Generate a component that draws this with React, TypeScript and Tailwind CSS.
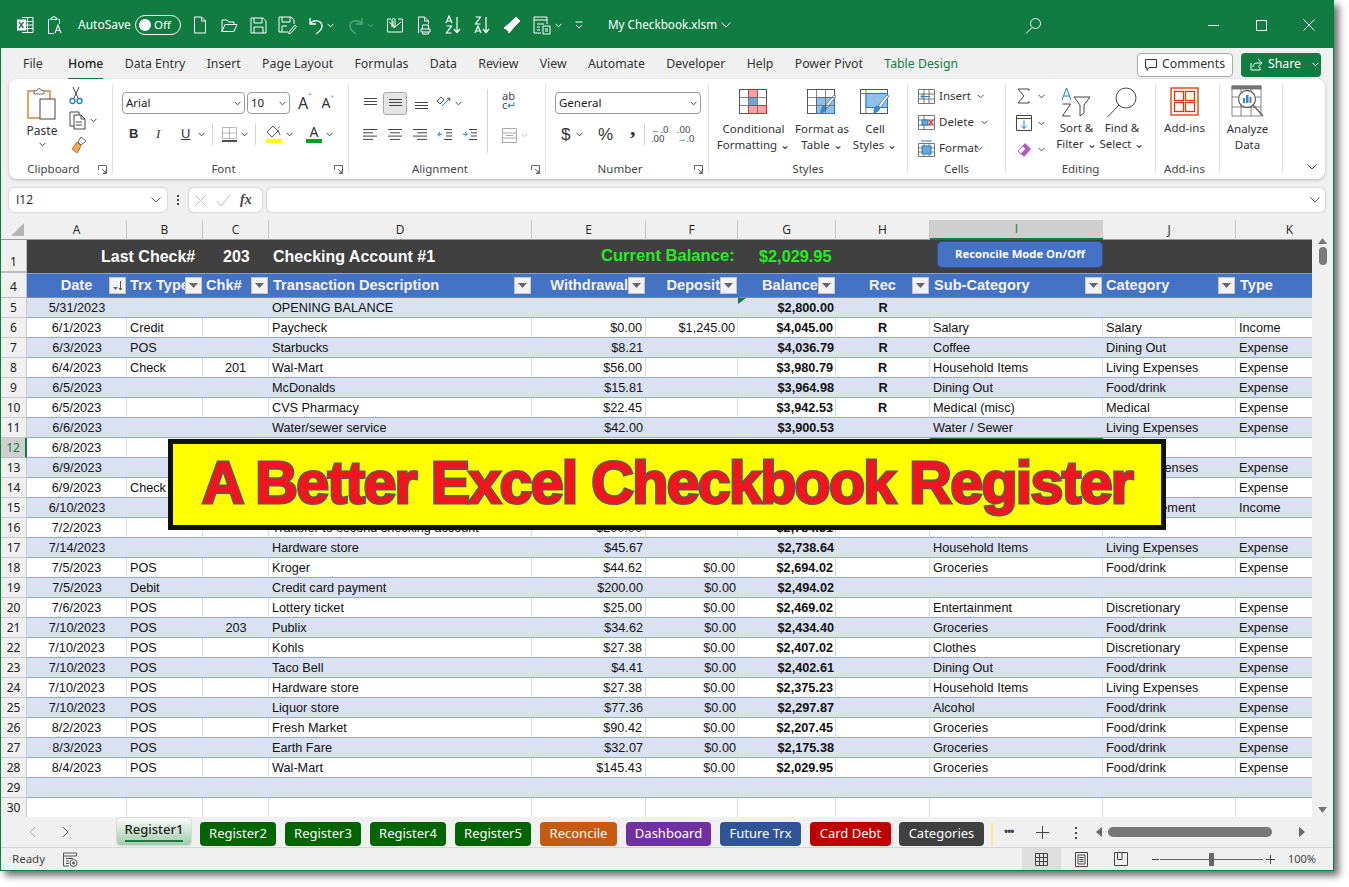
import type { ReactNode } from "react";

type Row = { n: number; c: string[] };

const rowsData: Row[] = [
  { n: 5, c: ["5/31/2023", "", "", "OPENING BALANCE", "", "", "$2,800.00", "R", "", "", ""] },
  { n: 6, c: ["6/1/2023", "Credit", "", "Paycheck", "$0.00", "$1,245.00", "$4,045.00", "R", "Salary", "Salary", "Income"] },
  { n: 7, c: ["6/3/2023", "POS", "", "Starbucks", "$8.21", "", "$4,036.79", "R", "Coffee", "Dining Out", "Expense"] },
  { n: 8, c: ["6/4/2023", "Check", "201", "Wal-Mart", "$56.00", "", "$3,980.79", "R", "Household Items", "Living Expenses", "Expense"] },
  { n: 9, c: ["6/5/2023", "", "", "McDonalds", "$15.81", "", "$3,964.98", "R", "Dining Out", "Food/drink", "Expense"] },
  { n: 10, c: ["6/5/2023", "", "", "CVS Pharmacy", "$22.45", "", "$3,942.53", "R", "Medical (misc)", "Medical", "Expense"] },
  { n: 11, c: ["6/6/2023", "", "", "Water/sewer service", "$42.00", "", "$3,900.53", "", "Water / Sewer", "Living Expenses", "Expense"] },
  { n: 12, c: ["6/8/2023", "", "", "", "", "", "", "", "", "", ""] },
  { n: 13, c: ["6/9/2023", "", "", "", "", "", "", "", "", "Living Expenses", "Expense"] },
  { n: 14, c: ["6/9/2023", "Check", "", "", "", "", "", "", "", "", "Expense"] },
  { n: 15, c: ["6/10/2023", "", "", "", "", "", "", "", "", "Reimbursement", "Income"] },
  { n: 16, c: ["7/2/2023", "", "", "Transfer to second checking account", "$200.00", "", "$2,784.31", "", "", "", ""] },
  { n: 17, c: ["7/14/2023", "", "", "Hardware store", "$45.67", "", "$2,738.64", "", "Household Items", "Living Expenses", "Expense"] },
  { n: 18, c: ["7/5/2023", "POS", "", "Kroger", "$44.62", "$0.00", "$2,694.02", "", "Groceries", "Food/drink", "Expense"] },
  { n: 19, c: ["7/5/2023", "Debit", "", "Credit card payment", "$200.00", "$0.00", "$2,494.02", "", "", "", ""] },
  { n: 20, c: ["7/6/2023", "POS", "", "Lottery ticket", "$25.00", "$0.00", "$2,469.02", "", "Entertainment", "Discretionary", "Expense"] },
  { n: 21, c: ["7/10/2023", "POS", "203", "Publix", "$34.62", "$0.00", "$2,434.40", "", "Groceries", "Food/drink", "Expense"] },
  { n: 22, c: ["7/10/2023", "POS", "", "Kohls", "$27.38", "$0.00", "$2,407.02", "", "Clothes", "Discretionary", "Expense"] },
  { n: 23, c: ["7/10/2023", "POS", "", "Taco Bell", "$4.41", "$0.00", "$2,402.61", "", "Dining Out", "Food/drink", "Expense"] },
  { n: 24, c: ["7/10/2023", "POS", "", "Hardware store", "$27.38", "$0.00", "$2,375.23", "", "Household Items", "Living Expenses", "Expense"] },
  { n: 25, c: ["7/10/2023", "POS", "", "Liquor store", "$77.36", "$0.00", "$2,297.87", "", "Alcohol", "Food/drink", "Expense"] },
  { n: 26, c: ["8/2/2023", "POS", "", "Fresh Market", "$90.42", "$0.00", "$2,207.45", "", "Groceries", "Food/drink", "Expense"] },
  { n: 27, c: ["8/3/2023", "POS", "", "Earth Fare", "$32.07", "$0.00", "$2,175.38", "", "Groceries", "Food/drink", "Expense"] },
  { n: 28, c: ["8/4/2023", "POS", "", "Wal-Mart", "$145.43", "$0.00", "$2,029.95", "", "Groceries", "Food/drink", "Expense"] },
  { n: 29, c: ["", "", "", "", "", "", "", "", "", "", ""] },
  { n: 30, c: ["", "", "", "", "", "", "", "", "", "", ""] },
];

// column K runs on past the vertical scrollbar, so the sheet clips it
const gridCols = "grid grid-cols-[26px_100px_76px_66px_263px_114px_92px_98px_94px_173px_133px_108px]";
const cellAlign = [
  "text-center",
  "text-left pl-[3px]",
  "text-center",
  "text-left pl-[3px]",
  "text-right pr-[3px]",
  "text-right pr-[2px]",
  "text-right pr-[2px] font-bold",
  "text-center font-bold",
  "text-left pl-[3px]",
  "text-left pl-[3px]",
  "text-left pl-[3px]",
];

function S({ w, h, children, className, sw = 1 }: { w: number; h: number; children: ReactNode; className?: string; sw?: number }) {
  return (
    <svg width={w} height={h} viewBox={`0 0 ${w} ${h}`} fill="none" stroke="currentColor" strokeWidth={sw} className={className}>
      {children}
    </svg>
  );
}

const Chev = ({ className = "text-[#444]" }: { className?: string }) => (
  <S w={7} h={5} className={className}><path d="M.5.8 3.5 3.8 6.5.8" /></S>
);

function Launcher() {
  return (
    <S w={9} h={9} className="text-[#666]">
      <path d="M.5 5V.5h8v8H5M4 4l4 4M8 5v3H5" />
    </S>
  );
}

function Group({ w, label, launcher, children }: { w: string; label: string; launcher?: boolean; children: ReactNode }) {
  return (
    <div className={`${w} flex flex-col shrink-0`}>
      <div className="flex-1 relative min-h-0 flex">{children}</div>
      <div className="h-[20px] flex items-center text-[11.5px] text-[#444]">
        <div className="flex-1 text-center">{label}</div>
        {launcher && <div className="w-[14px] flex justify-start"><Launcher /></div>}
      </div>
    </div>
  );
}

const Sep = () => <div className="w-px my-[5px] bg-[#e1e1e1] shrink-0" />;
const VLine = ({ className }: { className: string }) => <div className={`w-px bg-[#d5d5d5] ${className}`} />;

function TitleIcons() {
  return (
    <>
      {/* excel logo */}
      <S w={18} h={18} className="ml-[15px]">
        <path d="M6 1.5h11v15H6M6 5.5h11M6 9h11M6 12.5h11M11.5 1.5v15" />
        <rect x={1} y={3.5} width={9} height={11} fill="#fff" stroke="none" />
        <path d="M3 6l4.5 6M7.5 6 3 12" stroke="#107c41" strokeWidth={1.3} />
      </S>
      {/* clipboard with A */}
      <S w={18} h={20} className="ml-[13px]">
        <path d="M3 4.5H1.5v14H7M11 4.5h1.5V9M4 4.5V3h1.5a1.5 1.5 0 0 1 3 0H10v1.500z" />
        <path d="M8 18l3-8 3 8M9 15.500h4" strokeWidth={1.1} />
      </S>
      <span className="ml-[13px] text-[12px] text-white w-[54px]">AutoSave</span>
      <div className="w-[46px] h-[20px] rounded-full border border-white flex items-center pl-[3px] gap-[3px] ml-[3px]">
        <div className="w-[12px] h-[12px] rounded-full bg-white" />
        <span className="text-[11.5px] text-white">Off</span>
      </div>
      <S w={14} h={18} className="ml-[12px]"><path d="M1.5 1h7l4 4v12h-11zM8.500 1v4h4" /></S>
      <S w={17} h={15} className="ml-[14px]"><path d="M1 13.500V2h5l1.500 2H13v2.500M1 13.500h12l3-7H4z" /></S>
      <S w={17} h={17} className="ml-[12px]"><path d="M1 1h12l3 3v12H1zM4 1v5h8V1M4 16v-6h9v6" /></S>
      <S w={19} h={18} className="ml-[11px]"><path d="M1 1h12l3 3v4M10 16H1V1M4 1v5h8V1M4 16v-6h5" /><path d="M11 16l6-7 1.500 1.500-6 7-2 .5z" /></S>
      <S w={18} h={19} className="ml-[10px]"><path d="M3 2v6h6M3 8c3-5 12-4 12 2 0 4-3 6-6 8" strokeWidth={1.3} /></S>
      <Chev className="text-white ml-[2px]" />
      <S w={18} h={19} className="ml-[13px] text-[#5fa983]"><path d="M15 2v6H9M15 8C12 3 3 4 3 10c0 4 3 6 6 8" strokeWidth={1.3} /></S>
      <Chev className="text-[#5fa983] ml-[2px]" />
      <S w={18} h={16} className="ml-[12px]"><path d="M5 2H1.500v13h15V2H12M3 5l6 5 6-5" /><path d="M6 10V3a1.500 1.500 0 0 1 3 0v6.500a1 1 0 0 1-2 0V4" /></S>
      <S w={14} h={19} className="ml-[13px]"><path d="M1.500 12V1h6l4 4v3M7.500 1v4h4M1.500 12V17M4 13h9v3H4zM5.500 13v-4h6v4M5.500 16v2h6v-2" /></S>
      <S w={17} h={20} className="ml-[14px]" sw={1.2}><path d="M1 8l3-7 3 7M2 6h4M1.500 11h5l-5 7h5M12 2v15M9 14l3 3.500 3-3.500" /></S>
      <S w={17} h={20} className="ml-[12px]" sw={1.2}><path d="M1.500 2h5l-5 7h5M1 18l3-7 3 7M2 16h4M12 2v15M9 14l3 3.500 3-3.500" /></S>
      <S w={19} h={19} className="ml-[11px]"><path d="M14 1l4 4-6 6-4-4z" fill="#fff" /><path d="M8 7l4 4-5 6-5-5z" fill="#fff" /><path d="M3 13l3 3" stroke="#107c41" /></S>
      <S w={19} h={19} className="ml-[12px]"><path d="M1 1h13M1 4h13M14 8V1M1 1v16h7M4 8h7M4 11h3M4 14h3M10 10h7v8h-7zM12 13h3M12 15h3" /></S>
      <Chev className="text-white ml-[3px]" />
      <S w={8} h={9} className="ml-[13px]"><path d="M.5 1h7M1 4l3 3 3-3" /></S>
    </>
  );
}

function Sel({ text, w }: { text: string; w: string }) {
  return (
    <div className={`${w} h-[22px] bg-white border border-[#9a9a9a] rounded-[4px] flex items-center justify-between px-[3px] shrink-0`}>
      <span className="text-[11.5px] text-[#222]">{text}</span>
      <Chev />
    </div>
  );
}

function Clipboard() {
  return (
    <div className="flex pl-[16px] pt-[8px] gap-[10px]">
      <div className="flex flex-col items-center w-[34px]">
        <svg width={30} height={33} viewBox="0 0 30 33" fill="none">
          <rect x={1} y={4} width={22} height={27} fill="#fff" stroke="#d9862a" strokeWidth={1.500} />
          <path d="M7 7V3.500h3a2 2 0 0 1 4 0h3V7z" fill="#fff" stroke="#777" />
          <rect x={13} y={12} width={15} height={20} fill="#fff" stroke="#444" />
        </svg>
        <span className="text-[12px] text-[#333] mt-[3px] leading-[16px]">Paste</span>
        <Chev className="text-[#444] mt-[3px]" />
      </div>
      <div className="flex flex-col items-start gap-[6px] -mt-[1px]">
        <S w={14} h={19} className="text-[#444]"><path d="M4 1l5 11M10 1 5 12" /><circle cx={3.500} cy={15} r={2.500} stroke="#1b7dc4" strokeWidth={1.300} /><circle cx={10.500} cy={15} r={2.500} stroke="#1b7dc4" strokeWidth={1.300} /></S>
        <div className="flex items-center gap-[4px]">
          <S w={17} h={19} className="text-[#444]"><path d="M1 1h9v3M1 1v14h4M5 4h7l4 4v10H5zM12 4v4h4M7 11h6M7 14h6" /></S>
          <Chev />
        </div>
        <svg width={16} height={19} viewBox="0 0 16 19" fill="none" className="ml-[2px]">
          <path d="M10 1l5 4-5 4-3-3z" fill="#fff" stroke="#666" />
          <path d="M6 6l4 4-4 7-5-4z" fill="#f3a85c" stroke="#d06b12" />
        </svg>
      </div>
    </div>
  );
}

function FontGroup() {
  return (
    <div className="flex flex-col pl-[9px] pt-[13px]">
      <div className="flex items-center">
        <Sel text="Arial" w="w-[123px]" />
        <div className="w-[2px]" />
        <Sel text="10" w="w-[43px]" />
        <span className="ml-[8px] text-[16px] text-[#333] leading-none">A<sup className="text-[8px] text-[#1b7dc4] top-[-8px]">ˆ</sup></span>
        <span className="ml-[10px] text-[14px] text-[#333] leading-none">A<sup className="text-[8px] text-[#1b7dc4] top-[-5px]">ˇ</sup></span>
      </div>
      <div className="flex items-center mt-[8px] h-[24px] text-[#333]">
        <span className="ml-[7px] w-[10px] text-[13px] font-bold font-['Liberation_Sans',sans-serif]">B</span>
        <span className="ml-[17px] w-[8px] text-[13px] italic font-['Liberation_Serif',serif]">I</span>
        <span className="ml-[17px] w-[10px] text-[13px] underline font-['Liberation_Sans',sans-serif]">U</span>
        <div className="ml-[7px]"><Chev /></div>
        <VLine className="ml-[7px] h-[22px]" />
        <S w={15} h={15} className="ml-[9px] text-[#777]"><path d="M.5.5h14v11H.5zM7.500.5v11M.5 6h14" strokeDasharray="1 1" /><path d="M0 14h15" stroke="#111" strokeWidth={1.500} /></S>
        <div className="ml-[4px]"><Chev /></div>
        <VLine className="ml-[7px] h-[22px]" />
        <svg width={16} height={19} viewBox="0 0 16 19" fill="none" className="ml-[10px]">
          <path d="M7 1 1 7l5 5 6-6zM12 5l2 5" stroke="#555" />
          <path d="M12 3.500l1.500-2" stroke="#1b7dc4" />
          <rect x={0} y={14} width={16} height={4} fill="#ffff00" />
        </svg>
        <div className="ml-[4px]"><Chev /></div>
        <div className="ml-[13px] w-[16px] flex flex-col items-center">
          <span className="text-[14px] leading-[14px] text-[#333]">A</span>
          <div className="w-[16px] h-[4px] bg-[#00a020]" />
        </div>
        <div className="ml-[4px]"><Chev /></div>
      </div>
    </div>
  );
}

function Lines({ a }: { a: number[] }) {
  return (
    <S w={16} h={13} className="text-[#444]">
      {a.map((x, i) => (
        <path key={i} d={`M${x} ${1.5 + i * 3.3}h${i % 2 === 0 ? 14 : 10}`} />
      ))}
    </S>
  );
}

function Alignment() {
  return (
    <div className="flex pl-[8px] pt-[13px]">
      <div className="flex flex-col">
        <div className="flex items-center h-[22px] w-[126px]">
          <div className="w-[26px] flex justify-center -mt-[3px]"><S w={15} h={10} className="text-[#444]"><path d="M1 1.500h13M1 4.500h13M1 7.500h13" /></S></div>
          <div className="w-[24px] h-[23px] rounded-[3px] bg-[#e5e5e5] border border-[#a8a8a8] flex items-center justify-center"><S w={15} h={10} className="text-[#444]"><path d="M1 1.500h13M1 4.500h13M1 7.500h13" /></S></div>
          <div className="w-[28px] flex justify-center mt-[5px]"><S w={15} h={10} className="text-[#444]"><path d="M1 1.500h13M1 4.500h13M1 7.500h13" /></S></div>
          <S w={16} h={16} className="text-[#555] ml-[1px]"><path d="M1 6l4-4 3 3-4 4zM6 11l7-7M14 3l-3 .5M14 3l-.5 3" /><path d="M6 11l7-7" stroke="#1b7dc4" /></S>
          <div className="ml-[3px]"><Chev /></div>
        </div>
        <div className="flex items-center h-[24px] mt-[8px] w-[126px]">
          <div className="w-[26px] flex justify-center"><Lines a={[1, 1, 1, 1]} /></div>
          <div className="w-[26px] flex justify-center"><Lines a={[1, 3, 1, 3]} /></div>
          <div className="w-[26px] flex justify-center"><Lines a={[1, 5, 1, 5]} /></div>
          <div className="w-[26px] flex justify-center">
            <S w={16} h={13} className="text-[#444]"><path d="M7 1.500h8M9 4.800h6M9 8h6M7 11.500h8" /><path d="M5 6.300H1M3 4 1 6.300 3 8.500" stroke="#1b7dc4" /></S>
          </div>
          <div className="w-[26px] flex justify-center">
            <S w={16} h={13} className="text-[#444]"><path d="M7 1.500h8M9 4.800h6M9 8h6M7 11.500h8" /><path d="M1 6.300h4M3 4l2 2.300L3 8.500" stroke="#1b7dc4" /></S>
          </div>
        </div>
      </div>
      <VLine className="ml-[4px] h-[64px] -mt-[3px]" />
      <div className="flex flex-col items-start pl-[14px] -mt-[3px]">
        <div className="h-[22px] w-[18px] text-[11px] leading-[9px] text-[#444] mt-[2px] whitespace-nowrap">ab<br />c<span className="text-[#1b7dc4]">↵</span></div>
        <div className="flex items-center mt-[15px] gap-[4px] text-[#aaa]">
          <S w={15} h={15}><path d="M.5.5h14v14H.5zM.5 5h14M.5 10h14M4 7.500h7" /></S>
          <Chev className="text-[#bbb]" />
        </div>
      </div>
    </div>
  );
}

function NumberGroup() {
  return (
    <div className="flex flex-col pl-[9px] pt-[13px]">
      <Sel text="General" w="w-[146px]" />
      <div className="flex items-center mt-[8px] h-[24px] text-[#333]">
        <span className="ml-[6px] w-[10px] text-[17px] leading-none font-['Liberation_Sans',sans-serif]">$</span>
        <div className="ml-[5px]"><Chev /></div>
        <span className="ml-[15px] w-[18px] text-[17px] leading-none font-['Liberation_Sans',sans-serif]">%</span>
        <span className="ml-[14px] w-[8px] text-[22px] leading-none font-bold font-['Liberation_Serif',serif] -mt-[13px]">,</span>
        <VLine className="ml-[6px] h-[22px]" />
        <div className="ml-[6px] w-[18px] text-[9.500px] leading-[9px] text-[#444] whitespace-nowrap"><span className="text-[#1b7dc4]">←</span>.0<br />.00</div>
        <div className="ml-[8px] w-[18px] text-[9.500px] leading-[9px] text-[#444] whitespace-nowrap">.00<br /><span className="text-[#1b7dc4]">→</span>.0</div>
      </div>
    </div>
  );
}

function Grid5({ children }: { children?: ReactNode }) {
  return (
    <svg width={32} height={28} viewBox="0 0 32 28" fill="none">
      <rect x={1.500} y={1.500} width={27} height={24} fill="#fff" stroke="#555" />
      {children}
      <path d="M1.500 9.500h27M1.500 17.500h27M10.500 1.500v24M19.500 1.500v24" stroke="#666" strokeWidth={0.8} />
    </svg>
  );
}

function Brush() {
  return (
    <g>
      <path d="M30 8 21 20l-2-2 9-11z" fill="#fff" stroke="#666" strokeWidth={0.8} />
      <path d="M17 18c3-1 5 1 4 3-1 3-5 4-7 5 1-2 0-6 3-8z" fill="#3d87c6" />
    </g>
  );
}

function BigBtn({ icon, l1, l2, w }: { icon: ReactNode; l1: string; l2: string; w: string }) {
  return (
    <div className={`${w} flex flex-col items-center text-[11.5px] leading-[16px] text-[#333]`}>
      <div className="h-[30px] flex items-start justify-center">{icon}</div>
      <div className="mt-[3px] whitespace-nowrap">{l1}</div>
      <div className="whitespace-nowrap flex items-center gap-[3px]">{l2}</div>
    </div>
  );
}

function Styles() {
  return (
    <div className="flex pt-[9px] pl-[8px]">
      <BigBtn
        w="w-[73px]"
        l1="Conditional"
        l2="Formatting ⌄"
        icon={
          <Grid5>
            <rect x={10.500} y={1.500} width={9} height={8} fill="#f8a0a8" stroke="#d22" />
            <rect x={10.500} y={9.500} width={9} height={8} fill="#6aa8dc" />
            <rect x={10.500} y={17.500} width={18} height={8} fill="#f8a0a8" stroke="#d22" />
          </Grid5>
        }
      />
      <BigBtn
        w="w-[64px]"
        l1="Format as"
        l2="Table ⌄"
        icon={
          <Grid5>
            <rect x={10.500} y={9.500} width={18} height={16} fill="#8fc0ea" stroke="#1b7dc4" />
            <Brush />
          </Grid5>
        }
      />
      <BigBtn
        w="w-[42px]"
        l1="Cell"
        l2="Styles ⌄"
        icon={
          <svg width={32} height={28} viewBox="0 0 32 28" fill="none">
            <rect x={1.500} y={1.500} width={27} height={24} fill="#fff" stroke="#555" />
            <path d="M1.500 5.500h27M7 1.500v24" stroke="#666" strokeWidth={0.8} />
            <rect x={7} y={5.500} width={21.500} height={14} fill="#8fc0ea" stroke="#1b7dc4" />
            <Brush />
          </svg>
        }
      />
    </div>
  );
}

function Cells() {
  return (
    <div className="flex flex-col pl-[10px] pt-[6px] gap-[4px] text-[11.5px] text-[#333] leading-[22px]">
      <div className="flex items-center h-[22px]">
        <S w={17} h={15} className="text-[#555]"><path d="M.5.5h16v14H.5zM.5 5h16M.5 10h16M6 .5v14M11 .5v14" strokeWidth={0.8} /><path d="M12 7.500H3M6 4.500 3 7.500l3 3" stroke="#1b7dc4" /></S>
        <span className="ml-[4px] w-[38px]">Insert</span>
        <Chev />
      </div>
      <div className="flex items-center h-[22px]">
        <S w={17} h={15} className="text-[#555]"><path d="M.5.5h16v14H.5zM.5 5h16M.5 10h16M6 .5v14" strokeWidth={0.8} /><rect x={4} y={5} width={6} height={5} fill="#6aa8dc" stroke="#1b7dc4" /><path d="M11 5l4 5M15 5l-4 5" stroke="#e33" strokeWidth={1.300} /></S>
        <span className="ml-[4px] w-[42px]">Delete</span>
        <Chev />
      </div>
      <div className="flex items-center h-[22px]">
        <S w={17} h={17} className="text-[#555]"><path d="M.5 3.500h16v13H.5zM.5 8h16M.5 12h16M6 3.500v13M11 3.500v13" strokeWidth={0.8} /><rect x={4} y={6} width={9} height={8} fill="#6aa8dc" stroke="#1b7dc4" /><path d="M3 1h11" stroke="#1b7dc4" /></S>
        <span className="ml-[4px] w-[37px]">Format</span>
        <Chev />
      </div>
    </div>
  );
}

function Editing() {
  return (
    <div className="flex pl-[10px] pt-[8px]">
      <div className="flex flex-col gap-[8px] w-[37px]">
        <div className="flex items-center h-[19px] gap-[7px]">
          <S w={15} h={16} className="text-[#444] shrink-0"><path d="M13 3V1H2l6 7-6 7h11v-2" /></S>
          <Chev className="text-[#444] shrink-0" />
        </div>
        <div className="flex items-center h-[19px] gap-[6px]">
          <S w={16} h={16} className="text-[#444] shrink-0"><path d="M.5.5h15v15H.5zM.5 3.500h15" /><path d="M8 5.500v8M5 10.500l3 3 3-3" stroke="#1b7dc4" /></S>
          <Chev className="text-[#444] shrink-0" />
        </div>
        <div className="flex items-center h-[19px] gap-[6px]">
          <svg width={16} height={16} viewBox="0 0 16 16" className="shrink-0"><path d="M9 1l6 6-7 8-6-6z" fill="#b455c4" /><path d="M5 12 2 9l5-5 3 3z" fill="#fff" stroke="#b455c4" /></svg>
          <Chev className="text-[#444] shrink-0" />
        </div>
      </div>
      <BigBtn
        w="w-[47px]"
        l1="Sort &"
        l2="Filter ⌄"
        icon={
          <svg width={32} height={32} viewBox="0 0 32 32" fill="none" className="-mt-[1px]">
            <path d="M1 14 5.500 2 10 14M2.500 10h6" stroke="#1b7dc4" />
            <path d="M1.500 18h8l-8 12h8" stroke="#444" />
            <path d="M13 11h16l-6 8v8l-4 3V19z" fill="#fff" stroke="#444" />
          </svg>
        }
      />
      <BigBtn
        w="w-[44px]"
        l1="Find &"
        l2="Select ⌄"
        icon={
          <svg width={32} height={32} viewBox="0 0 32 32" fill="none" className="-mt-[1px]">
            <circle cx={20} cy={12} r={10} fill="#fff" stroke="#444" />
            <path d="M13 19 1.500 31" stroke="#444" />
          </svg>
        }
      />
    </div>
  );
}

function Ribbon() {
  return (
    <div className="h-[100px] mx-[8px] bg-white rounded-[8px] shadow-[0_1px_3px_rgba(0,0,0,0.25)] flex relative">
      <Group w="w-[103px]" label="Clipboard" launcher><Clipboard /></Group>
      <Sep />
      <Group w="w-[235px]" label="Font" launcher><FontGroup /></Group>
      <Sep />
      <Group w="w-[196px]" label="Alignment" launcher><Alignment /></Group>
      <Sep />
      <Group w="w-[162px]" label="Number" launcher><NumberGroup /></Group>
      <Sep />
      <Group w="w-[198px]" label="Styles"><Styles /></Group>
      <Sep />
      <Group w="w-[97px]" label="Cells"><Cells /></Group>
      <Sep />
      <Group w="w-[149px]" label="Editing"><Editing /></Group>
      <Sep />
      <Group w="w-[63px] pr-[6px]" label="Add-ins">
        <div className="w-full flex flex-col items-center pt-[8px] text-[11.5px] text-[#333] leading-[16px]">
          <svg width={29} height={29} viewBox="0 0 29 29" fill="none" stroke="#d83b01" strokeWidth={1.300}>
            <rect x={1} y={1} width={27} height={27} />
            <rect x={4.500} y={4.500} width={9} height={9} />
            <rect x={15.500} y={4.500} width={9} height={9} />
            <rect x={4.500} y={15.500} width={9} height={9} />
            <rect x={15.500} y={15.500} width={9} height={9} />
          </svg>
          <span className="mt-[4px]">Add-ins</span>
        </div>
      </Group>
      <Sep />
      <Group w="w-[62px] pr-[7px]" label="">
        <div className="w-full flex flex-col items-center pt-[6px] text-[11.5px] text-[#333] leading-[16px]">
          <svg width={34} height={33} viewBox="0 0 34 33" fill="none" stroke="#666" strokeWidth={0.8}>
            <rect x={1} y={1} width={29} height={30} fill="#fff" />
            <rect x={1} y={1} width={29} height={3} fill="#777" />
            <path d="M1 12h29M1 22h29M10 4v27M20 4v27" />
            <circle cx={16} cy={14} r={8.500} fill="#fff" strokeWidth={1.300} />
            <path d="M22 20l10 11" strokeWidth={1.500} />
            <rect x={12} y={13} width={2} height={5} fill="#2e88cf" stroke="none" />
            <rect x={15} y={10} width={2.500} height={8} fill="#2e88cf" stroke="none" />
            <rect x={18.500} y={12} width={2} height={6} fill="#777" stroke="none" />
          </svg>
          <span className="mt-[3px]">Analyze</span>
          <span>Data</span>
        </div>
      </Group>
      <Sep />
      <div className="flex-1 flex items-end justify-center pb-[9px] pl-[16px]"><S w={10} h={6} className="text-[#444]"><path d="M.5.5l4.500 4.500 4.500-4.500" /></S></div>
    </div>
  );
}

function FormulaBar() {
  return (
    <div className="h-[24px] mt-[9px] ml-[8px] mr-[8px] flex items-center">
      <div className="w-[158px] h-full bg-white rounded-[5px] shadow-[0_0_2px_rgba(0,0,0,0.35)] flex items-center justify-between pl-[7px] pr-[6px] text-[12px] text-[#222] font-['Open_Sans',sans-serif]">
        I12
        <S w={10} h={6} className="text-[#555]"><path d="M.5.5l4.500 4.500 4.500-4.500" /></S>
      </div>
      <div className="w-[22px] flex flex-col items-center gap-[2px]">
        <div className="w-[2px] h-[2px] bg-[#444]" /><div className="w-[2px] h-[2px] bg-[#444]" /><div className="w-[2px] h-[2px] bg-[#444]" />
      </div>
      <div className="w-[73px] h-full bg-white rounded-[5px] shadow-[0_0_2px_rgba(0,0,0,0.35)] flex items-center pl-[5px] gap-[9px]">
        <S w={13} h={13} className="text-[#bbb]"><path d="M1 1l11 11M12 1 1 12" /></S>
        <S w={15} h={13} className="text-[#bbb]"><path d="M1 7l4 5L14 1" /></S>
        <span className="text-[14px] italic font-bold font-['Liberation_Serif',serif] text-[#444] leading-none">fx</span>
      </div>
      <div className="ml-[5px] flex-1 h-full bg-white rounded-[5px] shadow-[0_0_2px_rgba(0,0,0,0.35)] flex items-center justify-end pr-[5px]">
        <S w={10} h={6} className="text-[#555]"><path d="M.5.5l4.500 4.500 4.500-4.500" /></S>
      </div>
    </div>
  );
}

function ColHead() {
  const cols = ["A", "B", "C", "D", "E", "F", "G", "H", "I", "J", "K"];
  return (
    <div className="w-[1311px] overflow-hidden mt-[8px] shrink-0">
      <div className={`${gridCols} h-[20px] font-['Open_Sans',sans-serif]`}>
        <div className="flex items-end justify-end pr-[3px] pb-[3px] border-b border-[#9a9a9a]">
          <svg width={13} height={13} viewBox="0 0 13 13"><path d="M13 0v13H0z" fill="#b5b5b5" /></svg>
        </div>
        {cols.map((c) => (
          <div
            key={c}
            className={
              c === "I"
                ? "bg-[#cfcfcf] border-b-2 border-[#107c41] text-[#107c41] flex items-center justify-center text-[12px]"
                : "border-r border-b border-r-[#c6c6c6] border-b-[#9a9a9a] flex items-center justify-center text-[12px] text-[#222]"
            }
          >
            {c}
          </div>
        ))}
      </div>
    </div>
  );
}

function FilterBtn({ sorted }: { sorted?: boolean }) {
  return (
    <div className="w-[17px] h-[17px] shrink-0 bg-[#f2f2f2] border border-[#c4c4c4] flex items-center justify-center mr-px">
      {sorted ? (
        <S w={11} h={11} className="text-[#555]"><path d="M8.500 1v9M7 8l1.500 2L10 8" /><path d="M1 7h5l-2.500 3z" fill="#666" stroke="none" /></S>
      ) : (
        <svg width={9} height={5} viewBox="0 0 9 5"><path d="M0 0h9L4.500 5z" fill="#666" /></svg>
      )}
    </div>
  );
}

function HeadRow() {
  const heads: { t: string; cls: string; sorted?: boolean }[] = [
    { t: "Date", cls: "text-center pl-[17px]", sorted: true },
    { t: "Trx Type", cls: "text-left pl-[3px]" },
    { t: "Chk#", cls: "text-left pl-[3px]" },
    { t: "Transaction Description", cls: "text-left pl-[4px]" },
    { t: "Withdrawal", cls: "text-right" },
    { t: "Deposit", cls: "text-right" },
    { t: "Balance", cls: "text-right" },
    { t: "Rec", cls: "text-center pl-[17px]" },
    { t: "Sub-Category", cls: "text-left pl-[4px]" },
    { t: "Category", cls: "text-left pl-[3px]" },
    { t: "Type", cls: "text-left pl-[4px]" },
  ];
  return (
    <div className={`${gridCols} h-[25px]`}>
      <div className="bg-[#f0f0f0] border-r border-b border-[#bdbdbd] flex items-end justify-center text-[12px] text-[#222] pb-[1px]">4</div>
      {heads.map((h) => (
        <div key={h.t} className="bg-[#4472c4] border-t border-b border-t-[#7f9fd8] border-b-[#8a8a8a] flex items-center overflow-hidden min-w-0">
          <div className={`flex-1 min-w-0 overflow-hidden whitespace-nowrap text-[14.600px] font-bold text-[#f4f4f4] font-['Liberation_Sans',sans-serif] ${h.cls}`}>{h.t}</div>
          <FilterBtn sorted={h.sorted} />
        </div>
      ))}
    </div>
  );
}

function TopRow() {
  const lbl = "font-['Liberation_Sans',sans-serif] font-bold whitespace-nowrap";
  return (
    <div className="grid grid-cols-[26px_1285px] h-[33px]">
      <div className="bg-[#f0f0f0] border-r border-b border-[#bdbdbd] flex items-end justify-center text-[12px] text-[#222] pb-[1px] shadow-[inset_0_-3px_0_-2px_#bdbdbd]">1</div>
      <div className="bg-[#404040] flex items-center">
        <span className={`${lbl} text-[16px] text-white ml-[74px] w-[122px]`}>Last Check#</span>
        <span className={`${lbl} text-[16px] text-white w-[50px]`}>203</span>
        <span className={`${lbl} text-[16px] text-white w-[328px]`}>Checking Account #1</span>
        <span className={`${lbl} text-[16.600px] text-[#22ee22] w-[158px]`}>Current Balance:</span>
        <span className={`${lbl} text-[16.300px] text-[#22ee22] w-[178px]`}>$2,029.95</span>
        <button className="w-[166px] h-[27px] -mt-[5px] rounded-[5px] bg-[#4472c4] border border-[#2f528f] text-white text-[11.300px] font-bold font-['Open_Sans',sans-serif]">Reconcile Mode On/Off</button>
      </div>
    </div>
  );
}

function DataRow({ r }: { r: Row }) {
  const band = r.n % 2 === 1;
  const last = r.n === 30;
  const selected = r.n === 12;
  return (
    <div className={`${gridCols} h-[20px]`}>
      <div
        className={
          selected
            ? "bg-[#cfcfcf] border-r-2 border-r-[#107c41] border-b border-b-[#bdbdbd] text-[#107c41] flex items-center justify-center text-[12px]"
            : "bg-[#f0f0f0] border-r border-b border-[#c8c8c8] text-[#222] flex items-center justify-center text-[12px]"
        }
      >
        {r.n}
      </div>
      {r.c.map((v, i) => (
        <div
          key={i}
          className={`relative text-[12.700px] leading-[20px] whitespace-nowrap overflow-hidden text-[#111] font-['Liberation_Sans',sans-serif] ${cellAlign[i]} ${band ? "bg-[#d9e1f2]" : "bg-white border-r border-[#dcdcdc]"} ${last ? "" : "border-b border-b-[#8ea9db]"} ${selected && i === 8 ? "border-t-2 border-t-[#107c41] border-x-2 border-x-[#107c41]" : ""}`}
        >
          {r.n === 5 && i === 6 && (
            <svg width={8} height={6} viewBox="0 0 8 6" className="absolute left-0 top-0"><path d="M0 0h8L0 6z" fill="#107c41" /></svg>
          )}
          {v}
        </div>
      ))}
    </div>
  );
}

function VScroll() {
  return (
    <div className="w-[21px] -mt-[20px] bg-[#f0f0f0] flex flex-col items-center pt-[20px] relative">
      <svg width={9} height={6} viewBox="0 0 9 6" className="shrink-0 mt-[-2px]"><path d="M4.500 0 9 6H0z" fill="#777" /></svg>
      <div className="w-[8px] h-[18px] mt-[3px] rounded-full bg-[#7a7a7a]" />
      <div className="flex-1" />
      <svg width={9} height={6} viewBox="0 0 9 6" className="mb-[4px]"><path d="M0 0h9L4.500 6z" fill="#777" /></svg>
    </div>
  );
}

function SheetTab({ t, c, w, ml }: { t: string; c: string; w: string; ml: string }) {
  return <div className={`${c} ${w} ${ml} h-[24px] mt-[5px] rounded-[4px] text-white text-[13px] flex items-center justify-center shrink-0`}>{t}</div>;
}

function TabsBar() {
  return (
    <div className="h-[31px] bg-[#f0f0f0] border-b border-[#d5d5d5] flex items-start shrink-0">
      <div className="w-[116px] h-full flex items-center pl-[28px] gap-[26px] pb-[1px]">
        <S w={7} h={12} className="text-[#aaa]"><path d="M6 1 1 6l5 5" /></S>
        <S w={7} h={12} className="text-[#555]"><path d="M1 1l5 5-5 5" /></S>
      </div>
      <div className="w-[74px] h-[27px] mt-[1px] rounded-[4px] shadow-[0_0_2px_rgba(0,0,0,0.35)] bg-gradient-to-b from-[#f8fbf8] to-[#9fcca9] flex flex-col items-center text-[13px] font-medium text-[#222] shrink-0">
        <span className="leading-[22px]">Register1</span>
        <div className="w-[58px] h-[2px] bg-[#107c41]" />
      </div>
      <SheetTab t="Register2" c="bg-[#006400]" w="w-[76px]" ml="ml-[9px]" />
      <SheetTab t="Register3" c="bg-[#006400]" w="w-[76px]" ml="ml-[9px]" />
      <SheetTab t="Register4" c="bg-[#006400]" w="w-[76px]" ml="ml-[9px]" />
      <SheetTab t="Register5" c="bg-[#006400]" w="w-[76px]" ml="ml-[9px]" />
      <SheetTab t="Reconcile" c="bg-[#c55a11]" w="w-[77px]" ml="ml-[9px]" />
      <SheetTab t="Dashboard" c="bg-[#7030a0]" w="w-[85px]" ml="ml-[9px]" />
      <SheetTab t="Future Trx" c="bg-[#2f5597]" w="w-[81px]" ml="ml-[9px]" />
      <SheetTab t="Card Debt" c="bg-[#c00000]" w="w-[81px]" ml="ml-[9px]" />
      <SheetTab t="Categories" c="bg-[#404040]" w="w-[85px]" ml="ml-[8px]" />
      <div className="w-[2px] h-[24px] mt-[5px] ml-[7px] bg-[#ffe699]" />
      <div className="ml-[11px] h-full flex items-center text-[#444] text-[11px] font-bold pb-[2px] tracking-[-1px]">•••</div>
      <S w={13} h={13} className="text-[#444] ml-[23px] mt-[9px]"><path d="M6.500 0v13M0 6.500h13" /></S>
      <div className="ml-[26px] mt-[10px] flex flex-col gap-[3px]">
        <div className="w-[2px] h-[2px] bg-[#444]" /><div className="w-[2px] h-[2px] bg-[#444]" /><div className="w-[2px] h-[2px] bg-[#444]" />
      </div>
      <div className="ml-[19px] w-[209px] h-[16px] mt-[7px] flex items-center">
        <svg width={6} height={10} viewBox="0 0 6 10"><path d="M6 0v10L0 5z" fill="#666" /></svg>
        <div className="w-[164px] h-[10px] rounded-full bg-[#777] ml-[6px]" />
        <div className="flex-1" />
        <svg width={6} height={10} viewBox="0 0 6 10"><path d="M0 0v10l6-5z" fill="#666" /></svg>
      </div>
    </div>
  );
}

function StatusBar() {
  return (
    <div className="h-[22px] bg-[#f0f0f0] flex items-center text-[11.500px] text-[#444] shrink-0">
      <span className="ml-[11px]">Ready</span>
      <S w={15} h={15} className="ml-[18px] text-[#555]"><path d="M.5 1h13v3H.5zM.5 4v10H6M3 6.500h7M3 9h3M3 11.500h3" /><circle cx={10.500} cy={11} r={3.500} /><circle cx={10.500} cy={11} r={1} fill="currentColor" /></S>
      <div className="flex-1" />
      <div className="w-[39px] h-full bg-[#dedede] flex items-center justify-center">
        <S w={13} h={13} className="text-[#444]"><path d="M.5.5h12v12H.5zM.5 4.500h12M.5 8.500h12M4.500.5v12M8.500.5v12" /></S>
      </div>
      <div className="w-[41px] flex justify-center">
        <S w={13} h={15} className="text-[#444]"><path d="M.5.5h12v14H.5zM3 3h7v9H3zM4.500 5.500h4M4.500 7.500h4M4.500 9.500h4" /></S>
      </div>
      <div className="w-[39px] flex justify-center">
        <S w={14} h={14} className="text-[#444]"><path d="M.5.5h13v13H.5zM8 .5v7H3.500V.5" /></S>
      </div>
      <div className="ml-[11px] w-[7px] h-px bg-[#444]" />
      <div className="ml-px w-[103px] h-px bg-[#666] relative">
        <div className="absolute left-[49px] -top-[6px] w-[5px] h-[13px] bg-[#666]" />
      </div>
      <S w={9} h={9} className="ml-[3px] text-[#444]"><path d="M4.500 0v9M0 4.500h9" /></S>
      <span className="ml-[13px] mr-[17px] text-[11px]">100%</span>
    </div>
  );
}

export default function App() {
  return (
    <div className="relative w-[1349px] h-[887px] bg-white overflow-hidden font-['Noto_Sans',sans-serif]">
      <div className="w-[1334px] h-[871px] bg-[#f0f0f0] border-x border-b border-[#107c41] shadow-[5px_5px_7px_rgba(0,0,0,0.55)] flex flex-col">
        <div className="h-[48px] pt-[2px] bg-[#107c41] flex items-center text-white shrink-0 -mx-px px-px">
          <TitleIcons />
          <span className="ml-[25px] text-[11.700px] text-white flex items-center gap-[4px]">My Checkbook.xlsm <S w={10} h={6}><path d="M.5.5l4.500 4.500 4.500-4.500" /></S></span>
          <div className="flex-1" />
          <S w={17} h={17} className="mr-[166px]"><circle cx={10.500} cy={6.500} r={5} /><path d="M7 10.500 1 16.500" /></S>
          <S w={11} h={3} className="mr-[37px]"><path d="M0 1.500h11" /></S>
          <S w={11} h={11} className="mr-[36px]"><rect x={.5} y={.5} width={10} height={10} /></S>
          <S w={12} h={12} className="mr-[18px]"><path d="M.5.5l11 11M11.500.5l-11 11" /></S>
        </div>
        <div className="h-[31px] pt-[2px] flex items-center shrink-0 text-[12.300px] text-[#333]">
          <div className="flex items-center gap-[21.300px] pl-[22px] flex-1">
            <span className="mr-[4px]">File</span>
            <span className="relative font-medium text-[#222]">Home<div className="absolute left-0 right-0 -bottom-[6px] h-[2px] bg-[#107c41]" /></span>
            <span>Data Entry</span>
            <span>Insert</span>
            <span>Page Layout</span>
            <span>Formulas</span>
            <span>Data</span>
            <span>Review</span>
            <span>View</span>
            <span>Automate</span>
            <span>Developer</span>
            <span>Help</span>
            <span>Power Pivot</span>
            <span className="text-[#107c41]">Table Design</span>
          </div>
          <div className="w-[96px] h-[24px] rounded-[4px] bg-white border border-[#aaa] flex items-center justify-center gap-[5px] mr-[8px]">
            <S w={12} h={12} className="text-[#333]"><path d="M.5.5h11v8H4l-2 3v-3H.5z" /></S>
            Comments
          </div>
          <div className="w-[80px] h-[24px] rounded-[4px] bg-[#107c41] text-white flex items-center pl-[9px] gap-[5px] mr-[12px]">
            <S w={13} h={13}><path d="M8 1l4 4-4 4M12 5H7C4 5 3 7 3 9M1 5v7h9V9" /></S>
            Share
            <div className="ml-[6px]"><Chev className="text-white" /></div>
          </div>
        </div>
        <Ribbon />
        <FormulaBar />
        <ColHead />
        <div className="flex flex-1 min-h-0">
          <div className="w-[1311px] overflow-hidden">
            <TopRow />
            <HeadRow />
            {rowsData.map((r) => <DataRow key={r.n} r={r} />)}
          </div>
          <VScroll />
        </div>
        <TabsBar />
        <StatusBar />
      </div>
      <div className="absolute left-[168px] top-[439px] w-[998px] h-[91px] bg-[#ffff00] border-[5px] border-[#111] flex items-center justify-center pb-[3px]">
        <span className="text-[59px] font-bold text-[#f5141e] font-['Liberation_Sans',sans-serif] [-webkit-text-stroke:3px_#5a5a5a] [paint-order:stroke_fill] tracking-[-1.650px] whitespace-nowrap">A Better Excel Checkbook Register</span>
      </div>
    </div>
  );
}
